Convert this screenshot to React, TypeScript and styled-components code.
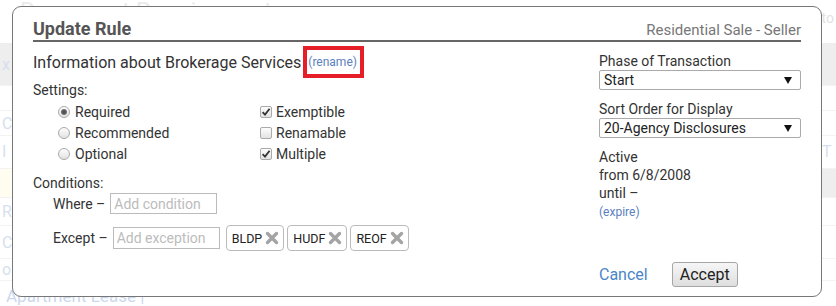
import React from "react";
import styled, { createGlobalStyle } from "styled-components";

const GlobalStyle = createGlobalStyle`
  html, body {
    margin: 0;
    padding: 0;
    background: #fff;
  }
  body {
    font-family: Roboto, "Liberation Sans", Arial, sans-serif;
    color: #333;
  }
`;

const Screen = styled.div`
  position: relative;
  width: 836px;
  height: 306px;
  overflow: hidden;
  background: #fff;
`;

/* faded page behind the dialog */
const BgPage = styled.div`
  display: flex;
  flex-direction: column;
  height: 100%;
`;

const BgTitle = styled.div`
  height: 45px;
  padding-left: 20px;
  padding-right: 2px;
  font-size: 24px;
  line-height: 22px;
  color: #ebebeb;
  display: flex;
  justify-content: space-between;
  span:last-child {
    font-size: 14px;
    line-height: 36px;
    color: #e2e2e2;
  }
`;

const BgRow = styled.div<{ $h: number; $tint?: string }>`
  height: ${({ $h }) => $h}px;
  box-sizing: border-box;
  display: flex;
  justify-content: space-between;
  align-items: center;
  border-bottom: 1px solid #f3f3f3;
  background: ${({ $tint }) => $tint || "transparent"};
  font-size: 16px;
  color: #d6dfee;
`;

const BgCell = styled.span<{ $bg?: string }>`
  display: flex;
  align-items: center;
  width: 14px;
  height: 100%;
  padding-left: 2px;
  background: ${({ $bg }) => $bg || "transparent"};
  overflow: hidden;
  white-space: nowrap;
`;

const BgFoot = styled.div`
  display: flex;
  align-items: flex-start;
  gap: 24px;
  padding: 5px 0 0 6px;
  font-size: 17px;
  line-height: 20px;
  color: #ccd8ee;
  b {
    display: block;
    width: 22px;
    height: 10px;
    margin-top: 1px;
    background: #fdeede;
  }
`;

/* dialog */
const Dialog = styled.div`
  position: absolute;
  left: 12px;
  top: 6px;
  width: 810px;
  height: 291px;
  box-sizing: border-box;
  border: 1px solid #777;
  border-radius: 9px;
  background: #fff;
  padding: 11px 20px 9px 20px;
  display: flex;
  flex-direction: column;
`;

const Header = styled.div`
  display: flex;
  justify-content: space-between;
  align-items: baseline;
  border-bottom: 2px solid #666;
`;

const Title = styled.h1`
  margin: 0;
  font-size: 18px;
  line-height: 22px;
  font-weight: 700;
  color: #555;
`;

const Context = styled.div`
  font-size: 15px;
  color: #777;
`;

const Body = styled.div`
  flex: 1;
  display: flex;
  justify-content: space-between;
`;

const LeftCol = styled.div`
  display: flex;
  flex-direction: column;
`;

const RightCol = styled.div`
  width: 202px;
  padding-top: 10px;
  display: flex;
  flex-direction: column;
`;

const NameRow = styled.div`
  margin-top: 10px;
  height: 20px;
  display: flex;
  align-items: center;
  font-size: 16px;
  color: #333;
`;

const Highlight = styled.span`
  margin-left: 2px;
  height: 32px;
  box-sizing: border-box;
  border: 4px solid #e61e27;
  padding: 0 3px 0 1px;
  display: inline-flex;
  align-items: center;
`;

const LinkSmall = styled.a`
  font-size: 12px;
  color: #5b7fc0;
  text-decoration: none;
  cursor: pointer;
`;

const SectionLabel = styled.div<{ $mt: number }>`
  margin-top: ${({ $mt }) => $mt}px;
  font-size: 14px;
  line-height: 18px;
  color: #333;
`;

const OptionGrid = styled.div`
  margin-top: 2px;
  padding-left: 25px;
  display: grid;
  grid-template-columns: 202px auto;
  grid-auto-rows: 21px;
`;

const Option = styled.label`
  display: flex;
  align-items: center;
  font-size: 14px;
  color: #333;
`;

const Radio = styled.span<{ $on?: boolean }>`
  position: relative;
  width: 12px;
  height: 12px;
  box-sizing: border-box;
  border-radius: 50%;
  border: 1px solid #aaa;
  background: linear-gradient(#fdfdfd, #e2e2e2);
  margin-right: 5px;
  &::after {
    content: "";
    display: ${({ $on }) => ($on ? "block" : "none")};
    position: absolute;
    left: 2px;
    top: 2px;
    width: 6px;
    height: 6px;
    border-radius: 50%;
    background: radial-gradient(#555 35%, #999 100%);
  }
`;

const Box = styled.span`
  display: flex;
  align-items: center;
  justify-content: center;
  width: 12px;
  height: 12px;
  box-sizing: border-box;
  border-radius: 2px;
  border: 1px solid #aaa;
  background: linear-gradient(#fdfdfd, #e2e2e2);
  margin-right: 4px;
`;

const CondRow = styled.div<{ $mt: number; $h: number }>`
  margin-top: ${({ $mt }) => $mt}px;
  height: ${({ $h }) => $h}px;
  padding-left: 20px;
  display: flex;
  align-items: center;
  gap: 5px;
  font-size: 14px;
  color: #333;
`;

const TextField = styled.input<{ $h: number }>`
  width: 107px;
  height: ${({ $h }) => $h}px;
  box-sizing: border-box;
  border: 1px solid #bbb;
  padding: 0 3px;
  font-family: inherit;
  font-size: 14px;
  color: #333;
  outline: none;
  &::placeholder {
    color: #bcbcbc;
  }
`;

const Tags = styled.div`
  display: flex;
  gap: 3px;
  margin-left: 1px;
`;

const Tag = styled.span`
  height: 26px;
  box-sizing: border-box;
  border: 1px solid #bbb;
  border-radius: 4px;
  padding: 0 4px 0 5px;
  display: flex;
  align-items: center;
  gap: 3px;
  font-size: 12.5px;
  color: #222;
  background: #fff;
`;

const FieldLabel = styled.div<{ $mt: number }>`
  margin-top: ${({ $mt }) => $mt}px;
  font-size: 14px;
  line-height: 18px;
  color: #333;
`;

const SelectBox = styled.div`
  height: 20px;
  box-sizing: border-box;
  border: 1px solid #aaa;
  border-radius: 2px;
  padding: 0 8px 0 4px;
  display: flex;
  align-items: center;
  justify-content: space-between;
  font-size: 14px;
  color: #222;
  background: #fff;
`;

const Info = styled.div`
  margin-top: 10px;
  font-size: 14px;
  line-height: 18px;
  color: #333;
`;

const Footer = styled.div`
  margin-top: auto;
  display: flex;
  align-items: center;
  gap: 24px;
`;

const CancelLink = styled.a`
  font-size: 16px;
  color: #4a86c8;
  text-decoration: none;
  cursor: pointer;
`;

const AcceptButton = styled.button`
  width: 66px;
  height: 25px;
  box-sizing: border-box;
  border: 1px solid #a6a6a6;
  border-radius: 3px;
  background: linear-gradient(#f6f6f6, #dedede);
  font-family: inherit;
  font-size: 16px;
  color: #222;
  padding: 0;
  cursor: pointer;
`;

const CloseX = () => (
  <svg width="14" height="14" viewBox="0 0 14 14">
    <path d="M2.5 2.5 L11.5 11.5 M11.5 2.5 L2.5 11.5" stroke="#a4a4a4" strokeWidth="3.4" strokeLinecap="round" />
  </svg>
);

const Check = () => (
  <svg width="10" height="10" viewBox="0 0 10 10">
    <path d="M1.6 5.2 L4 7.6 L8.6 1.8" stroke="#333" strokeWidth="1.8" fill="none" />
  </svg>
);

const Caret = () => (
  <svg width="8" height="7" viewBox="0 0 8 7">
    <path d="M0 0 H8 L4 7 Z" fill="#111" />
  </svg>
);

const bgRows = [
  { h: 45, tint: "#eeeeee", left: "x", right: "" },
  { h: 26, left: "", right: "" },
  { h: 26, left: "C", right: "" },
  { h: 34, left: "I", right: "T" },
  { h: 30, tint: "#fffdf0", left: "", right: "", rightBg: "#eeeeee" },
  { h: 30, left: "R", right: "" },
  { h: 34, left: "C", right: "" },
  { h: 23, left: "o", right: "" },
];

export default function App() {
  return (
    <Screen>
      <GlobalStyle />
      <BgPage>
        <BgTitle>
          <span>Document Requirements</span>
          <span>to</span>
        </BgTitle>
        {bgRows.map((r, i) => (
          <BgRow key={i} $h={r.h} $tint={r.tint}>
            <BgCell>{r.left}</BgCell>
            <BgCell $bg={r.rightBg}>{r.right}</BgCell>
          </BgRow>
        ))}
        <BgFoot>
          <span>Apartment Lease |</span>
          <b />
        </BgFoot>
      </BgPage>

      <Dialog>
        <Header>
          <Title>Update Rule</Title>
          <Context>Residential Sale - Seller</Context>
        </Header>
        <Body>
          <LeftCol>
            <NameRow>
              Information about Brokerage Services
              <Highlight>
                <LinkSmall>(rename)</LinkSmall>
              </Highlight>
            </NameRow>

            <SectionLabel $mt={9}>Settings:</SectionLabel>
            <OptionGrid>
              <Option>
                <Radio $on />
                Required
              </Option>
              <Option>
                <Box>
                  <Check />
                </Box>
                Exemptible
              </Option>
              <Option>
                <Radio />
                Recommended
              </Option>
              <Option>
                <Box />
                Renamable
              </Option>
              <Option>
                <Radio />
                Optional
              </Option>
              <Option>
                <Box>
                  <Check />
                </Box>
                Multiple
              </Option>
            </OptionGrid>

            <SectionLabel $mt={10}>Conditions:</SectionLabel>
            <CondRow $mt={1} $h={21}>
              Where –
              <TextField $h={21} placeholder="Add condition" />
            </CondRow>
            <CondRow $mt={11} $h={26}>
              Except –
              <TextField $h={22} placeholder="Add exception" />
              <Tags>
                {["BLDP", "HUDF", "REOF"].map((t) => (
                  <Tag key={t}>
                    {t}
                    <CloseX />
                  </Tag>
                ))}
              </Tags>
            </CondRow>
          </LeftCol>

          <RightCol>
            <FieldLabel $mt={0}>Phase of Transaction</FieldLabel>
            <SelectBox>
              Start
              <Caret />
            </SelectBox>
            <FieldLabel $mt={10}>Sort Order for Display</FieldLabel>
            <SelectBox>
              20-Agency Disclosures
              <Caret />
            </SelectBox>
            <Info>
              Active
              <br />
              from 6/8/2008
              <br />
              until –
              <br />
              <LinkSmall>(expire)</LinkSmall>
            </Info>
            <Footer>
              <CancelLink>Cancel</CancelLink>
              <AcceptButton>Accept</AcceptButton>
            </Footer>
          </RightCol>
        </Body>
      </Dialog>
    </Screen>
  );
}
